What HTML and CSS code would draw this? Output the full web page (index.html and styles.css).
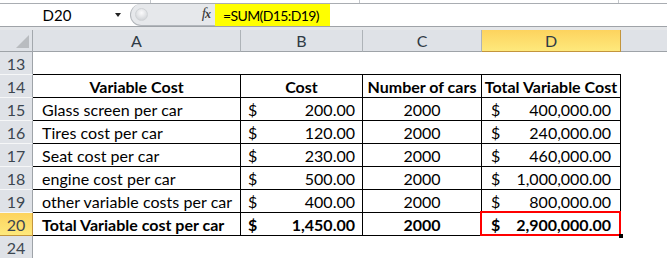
FILE: index.html
```html
<!DOCTYPE html>
<html>
<head>
<meta charset="utf-8">
<link rel="stylesheet" href="styles.css">
</head>
<body>
<div class="app">
  <div class="ribbon-edge">
    <span class="tick t1"></span><span class="tick t2"></span><span class="tick t3"></span>
  </div>
  <div class="fbar">
    <div class="namebox"><span class="ref">D20</span><span class="drop"></span></div>
    <div class="fx-area">
      <span class="knob"></span>
      <span class="fx"><i>f</i><i class="sx">x</i></span>
    </div>
    <div class="formula"><span class="ftext">=SUM(D15:D19)</span></div>
    <div class="frest"></div>
  </div>
  <div class="band"></div>
  <div class="sheet">
    <div class="corner"><span class="tri"></span></div>
    <div class="ch">A</div>
    <div class="ch">B</div>
    <div class="ch">C</div>
    <div class="ch sel">D</div>
    <div class="ch last"></div>

    <div class="rh">13</div>
    <div class="c"></div><div class="c"></div><div class="c"></div><div class="c"></div><div class="c"></div>

    <div class="rh">14</div>
    <div class="c t top b center">Variable Cost</div>
    <div class="c t top b center">Cost</div>
    <div class="c t top b center">Number of cars</div>
    <div class="c t top b center">Total Variable Cost</div>
    <div class="c"></div>

    <div class="rh">15</div>
    <div class="c t lbl">Glass screen per car</div>
    <div class="c t money mb"><span>$</span><span>200.00</span></div>
    <div class="c t center">2000</div>
    <div class="c t money md"><span>$</span><span>400,000.00</span></div>
    <div class="c"></div>

    <div class="rh">16</div>
    <div class="c t lbl">Tires cost per car</div>
    <div class="c t money mb"><span>$</span><span>120.00</span></div>
    <div class="c t center">2000</div>
    <div class="c t money md"><span>$</span><span>240,000.00</span></div>
    <div class="c"></div>

    <div class="rh">17</div>
    <div class="c t lbl">Seat cost per car</div>
    <div class="c t money mb"><span>$</span><span>230.00</span></div>
    <div class="c t center">2000</div>
    <div class="c t money md"><span>$</span><span>460,000.00</span></div>
    <div class="c"></div>

    <div class="rh">18</div>
    <div class="c t lbl">engine cost per car</div>
    <div class="c t money mb"><span>$</span><span>500.00</span></div>
    <div class="c t center">2000</div>
    <div class="c t money md"><span>$</span><span>1,000,000.00</span></div>
    <div class="c"></div>

    <div class="rh">19</div>
    <div class="c t lbl">other variable costs per car</div>
    <div class="c t money mb"><span>$</span><span>400.00</span></div>
    <div class="c t center">2000</div>
    <div class="c t money md"><span>$</span><span>800,000.00</span></div>
    <div class="c"></div>

    <div class="rh sel">20</div>
    <div class="c t lbl b">Total Variable cost per car</div>
    <div class="c t money mb b"><span>$</span><span>1,450.00</span></div>
    <div class="c t center b">2000</div>
    <div class="c t money md b active"><span>$</span><span>2,900,000.00</span></div>
    <div class="c"></div>

    <div class="rh">24</div>
    <div class="c"></div><div class="c"></div><div class="c"></div><div class="c"></div><div class="c"></div>
  </div>
</div>
</body>
</html>
```

FILE: styles.css
```css
* { box-sizing: border-box; }
html, body { margin: 0; padding: 0; background: #fff; }
body { width: 667px; height: 258px; overflow: hidden; font-family: "Lato", "Liberation Sans", sans-serif; color: #000; }

.app { display: flex; flex-direction: column; }

.ribbon-edge { height: 4px; position: relative; background: #fff; border-bottom: 1px solid #a9adb2; }
.tick { position: absolute; top: 0; width: 1px; height: 3px; background: #c4c7cb; }
.t1 { left: 150px; } .t2 { left: 359px; } .t3 { left: 618px; }

.fbar { height: 23px; display: flex; border-bottom: 1px solid #9fa3a8; background: #fff; }
.namebox { width: 130px; display: flex; align-items: center; }
.ref { width: 114px; text-align: center; font-size: 15px; }
.drop { width: 0; height: 0; border-left: 3.5px solid transparent; border-right: 3.5px solid transparent; border-top: 4px solid #222; margin-left: 1px; }
.fx-area { width: 85px; background: #e6e8eb; border-left: 1px solid #b3b7bc; border-bottom: 1px solid #b3b7bc; border-radius: 12px 0 0 12px; display: flex; align-items: center; justify-content: space-between; padding: 0 5px 0 4px; }
.knob { width: 13px; height: 13px; border-radius: 50%; background: radial-gradient(circle at 50% 35%, #fbfbfc 0%, #dfe1e4 55%, #c7cacd 100%); border: 1px solid #d0d3d6; }
.fx { font-family: "Liberation Serif", serif; font-size: 15px; color: #3a3a3a; letter-spacing: -1px; margin-bottom: 2px; }
.fx .sx { font-size: 12px; font-weight: bold; }
.formula { width: 115px; background: #ffff00; display: flex; align-items: center; padding-left: 8px; }
.ftext { font-size: 14px; letter-spacing: -0.6px; }
.frest { flex: 1; }

.band { height: 3px; background: #e4e6e9; }

.sheet { display: grid; grid-template-columns: 33px 208px 122px 119px 139px 46px; grid-template-rows: 22px repeat(9, 23px); }

.corner { background: #dfe2e7; border-right: 1px solid #a3a8ad; border-bottom: 1px solid #9ea3a8; position: relative; }
.tri { position: absolute; right: 3px; bottom: 3px; width: 0; height: 0; border-left: 13px solid transparent; border-bottom: 13px solid #b9bcc0; }
.ch { background: #dfe2e7; border-right: 1px solid #aeb3b8; border-bottom: 1px solid #9ea3a8; display: flex; align-items: center; justify-content: center; font-size: 16px; color: #2f3a45; }
.ch.sel { background: linear-gradient(#fdd35e, #fee97c); border-right: 1px solid #c3953c; border-bottom: 1px solid #c3953c; }
.ch.last { border-right: none; }

.rh { background: #dfe2e7; border-right: 1px solid #9ea3a8; border-bottom: 1px solid #f6f7f8; display: flex; align-items: center; justify-content: center; font-size: 16px; color: #3c4650; }
.rh.sel { background: linear-gradient(#fdd35e, #fee97c); border-right: 1px solid #c3953c; border-bottom: 1px solid #c3953c; }

.c { font-size: 16px; display: flex; align-items: center; white-space: nowrap; }
.c.t { border-right: 1px solid #000; border-bottom: 1px solid #000; }
.c.top { border-top: 1px solid #000; margin-top: -1px; }
.c.center { justify-content: center; }
.c.lbl { padding-left: 9px; letter-spacing: 0.05px; }
.c.b { font-weight: bold; letter-spacing: 0; }
.c.money { justify-content: space-between; }
.c.mb { padding: 0 7px 0 7px; }
.c.md { padding: 0 9px 0 9px; }
.c.active { position: relative; }
.c.active::after { content: ""; position: absolute; left: -2px; top: -2px; right: -1px; bottom: -1px; border: 2px solid #ff0000; }
.c.active::before { content: ""; position: absolute; right: -3px; bottom: -3px; width: 4px; height: 4px; background: #000; z-index: 2; }
```
